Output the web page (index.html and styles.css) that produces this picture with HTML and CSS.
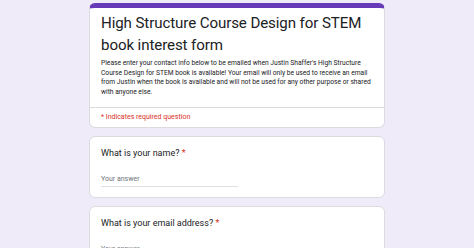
FILE: index.html
```html
<!DOCTYPE html>
<html lang="en">
<head>
  <meta charset="UTF-8">
  <title>High Structure Course Design for STEM book interest form</title>
  <link rel="stylesheet" href="styles.css">
</head>
<body>
  <div class="container" role="main">
    <div class="card header-card">
      <div class="header-top">
        <h1 class="form-title">High Structure Course Design for STEM book interest form</h1>
        <p class="form-desc">Please enter your contact info below to be emailed when Justin Shaffer's High Structure Course Design for STEM book is available! Your email will only be used to receive an email from Justin when the book is available and will not be used for any other purpose or shared with anyone else.</p>
      </div>
      <div class="required-note">* Indicates required question</div>
    </div>

    <div class="card question">
      <div class="q-title">What is your name? <span class="star">*</span></div>
      <div class="answer">Your answer</div>
    </div>

    <div class="card question">
      <div class="q-title">What is your email address? <span class="star">*</span></div>
      <div class="answer">Your answer</div>
    </div>
  </div>
</body>
</html>
```

FILE: styles.css
```css
body {
  margin: 0;
  background: #efebf8;
  font-family: Roboto, "Liberation Sans", sans-serif;
  color: #202124;
  overflow: hidden;
}

.container {
  width: 296px;
  margin: 0 auto;
  padding-top: 3px;
}

.card {
  background: #fff;
  border: 1px solid #dadce0;
  border-radius: 6px;
  margin-bottom: 8px;
}

.header-card {
  border-top: 5px solid #673ab7;
}

.header-top {
  padding: 4px 11px 9px;
  border-bottom: 1px solid #dadce0;
}

.form-title {
  font-size: 15.1px;
  font-weight: 400;
  letter-spacing: -0.1px;
  line-height: 22px;
  margin: 0 0 3px;
}

.form-desc {
  font-size: 6.7px;
  line-height: 9.7px;
  margin: 0;
}

.required-note {
  color: #d93025;
  font-size: 7px;
  padding: 5px 11px 6px;
}

.question {
  padding: 10px 11px 10px;
}

.q-title {
  font-size: 9px;
  line-height: 12px;
}

.star {
  color: #d93025;
}

.answer {
  width: 137px;
  margin-top: 16px;
  padding-bottom: 3px;
  border-bottom: 1px solid #e0e0e0;
  font-size: 7px;
  color: #70757a;
}
```
